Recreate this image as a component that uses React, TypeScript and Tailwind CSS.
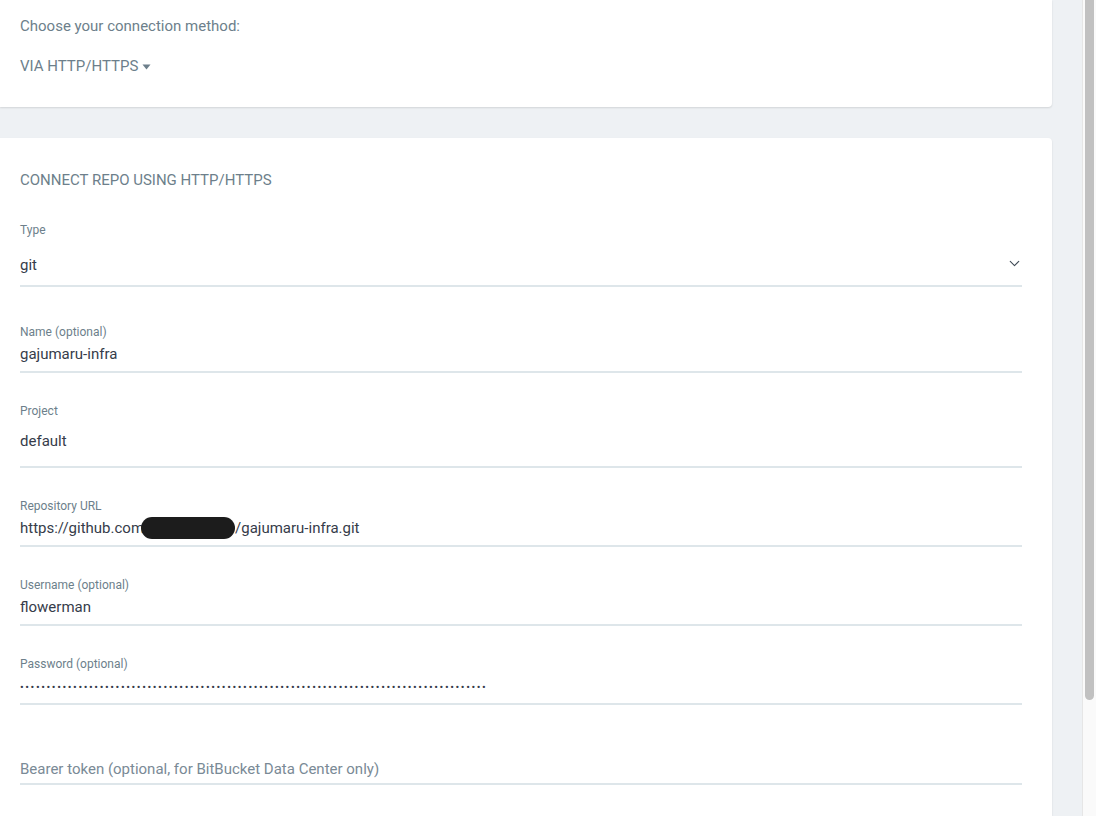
import React from "react";
import { ChevronDown } from "lucide-react";

const font = { fontFamily: "Roboto, 'Noto Sans', sans-serif" };

function TextField({ label, children, mt }: { label: string; children: React.ReactNode; mt: string }) {
  return (
    <div className={`flex flex-col ${mt}`}>
      <div className="text-[12px] leading-[16px] text-[#6d7f8b]">{label}</div>
      <div className="mt-[4px] h-[20px] text-[15px] leading-[20px] text-[#363c4a] whitespace-nowrap">{children}</div>
      <div className="mt-[7px] h-[2px] bg-[#dee6ea]" />
    </div>
  );
}

export default function App() {
  const dots = "•".repeat(88);
  return (
    <div className="flex h-[816px] w-[1096px] overflow-hidden bg-[#eef1f4]" style={font}>
      <div className="flex-1 flex flex-col pr-[30px]">
        <div className="h-[107px] bg-white rounded-br-[4px] shadow-[0_1px_2px_rgba(0,0,0,0.12)] px-[20px] pt-[16px]">
          <div className="text-[15px] leading-[20px] text-[#6d7f8b]">Choose your connection method:</div>
          <div className="mt-[20px] flex items-center gap-[4px] text-[15px] leading-[20px] text-[#6d7f8b]">
            <span>VIA HTTP/HTTPS</span>
            <svg width="9" height="6" viewBox="0 0 9 6" className="mt-[1px]">
              <path d="M0.5 0.5 L8.5 0.5 L4.5 5.5 Z" fill="#6d7f8b" />
            </svg>
          </div>
        </div>
        <div className="mt-[31px] flex-1 bg-white rounded-tr-[4px] shadow-[0_1px_2px_rgba(0,0,0,0.12)] pl-[20px] pr-[30px] pt-[32px]">
          <div className="text-[15px] leading-[20px] text-[#6d7f8b]">CONNECT REPO USING HTTP/HTTPS</div>
          <div className="mt-[33px] flex flex-col">
            <div className="text-[12px] leading-[14px] text-[#6d7f8b]">Type</div>
            <div className="mt-[18px] flex items-center justify-between h-[20px]">
              <span className="text-[15px] leading-[20px] text-[#363c4a]">git</span>
              <ChevronDown size={17} strokeWidth={1.5} color="#3f4a56" className="mr-[-1px] -mt-[4px]" />
            </div>
            <div className="mt-[10px] h-[2px] bg-[#dee6ea]" />
          </div>
          <TextField label="Name (optional)" mt="mt-[37px]">gajumaru-infra</TextField>
          <div className="mt-[30px] flex flex-col">
            <div className="text-[12px] leading-[16px] text-[#6d7f8b]">Project</div>
            <div className="mt-[12px] h-[20px] text-[15px] leading-[20px] text-[#363c4a]">default</div>
            <div className="mt-[15px] h-[2px] bg-[#dee6ea]" />
          </div>
          <TextField label="Repository URL" mt="mt-[30px]">
            <span>https://github.com</span>
            <span className="inline-block align-middle -ml-[3px] w-[94px] h-[22px] rounded-full bg-[#1c1c1c] -mt-[2px]" />
            <span>/gajumaru-infra.git</span>
          </TextField>
          <TextField label="Username (optional)" mt="mt-[30px]">flowerman</TextField>
          <TextField label="Password (optional)" mt="mt-[30px]">
            <span className="block pt-[5px] text-[11px] leading-[14px] tracking-[1.6px] text-[#363c4a]">{dots}</span>
          </TextField>
          <div className="mt-[54px] flex flex-col">
            <div className="h-[20px] text-[15px] leading-[20px] text-[#7a8a96]">Bearer token (optional, for BitBucket Data Center only)</div>
            <div className="mt-[4px] h-[2px] bg-[#dee6ea]" />
          </div>
        </div>
      </div>
      <div className="w-[14px] flex-none bg-[#fafafa] border-l border-[#e6e6e6] flex justify-center">
        <div className="w-[9px] h-[700px] bg-[#c1c1c1] rounded-b-[5px]" />
      </div>
    </div>
  );
}
